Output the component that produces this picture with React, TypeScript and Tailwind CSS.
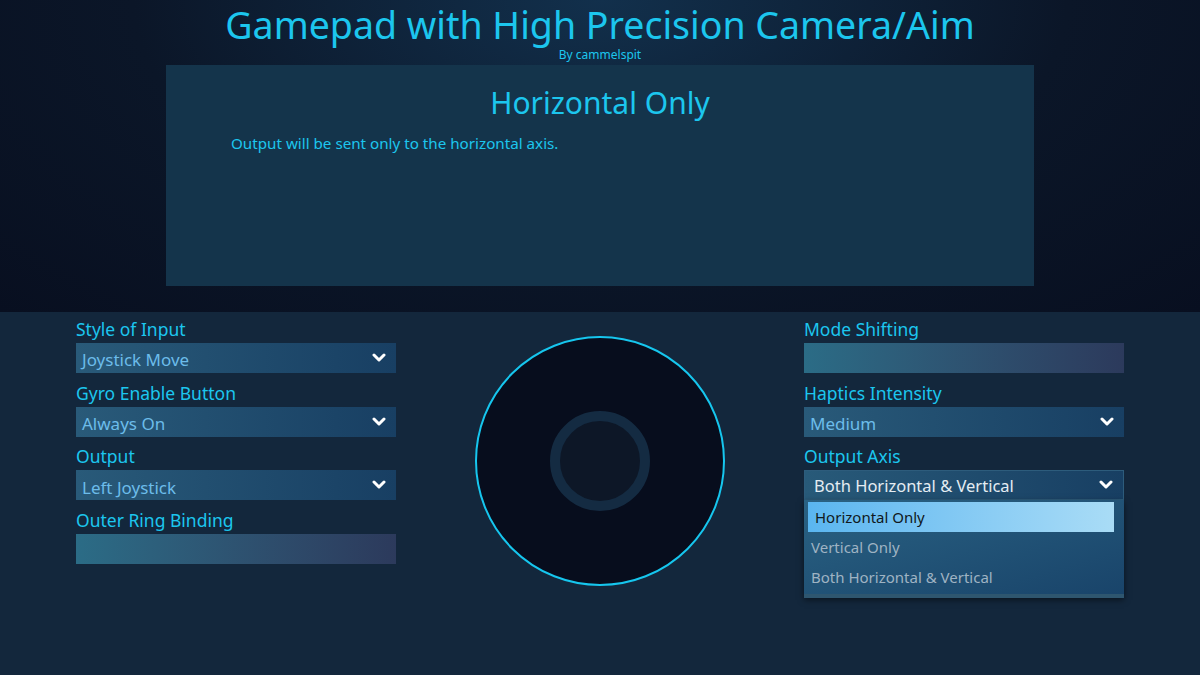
const font = { fontFamily: '"Noto Sans", "Open Sans", sans-serif' };

const Chevron = () => (
  <svg width="14" height="10" viewBox="0 0 14 10" className="shrink-0">
    <polyline points="2,2 7,7 12,2" fill="none" stroke="#ffffff" strokeWidth="3" strokeLinecap="round" strokeLinejoin="round" />
  </svg>
);

type Field = { label: string; value?: string };

const leftFields: Field[] = [
  { label: 'Style of Input', value: 'Joystick Move' },
  { label: 'Gyro Enable Button', value: 'Always On' },
  { label: 'Output', value: 'Left Joystick' },
  { label: 'Outer Ring Binding' },
];

const FieldRow = ({ field }: { field: Field }) => (
  <div className="flex flex-col">
    <div className="h-[22px] text-[17.5px] leading-[21px] text-[#1cc6ee]">{field.label}</div>
    {field.value ? (
      <div className="mt-[2px] flex h-[30px] items-center justify-between bg-gradient-to-r from-[#295a79] to-[#183f63] pl-[6px] pr-[10px]">
        <span className="pt-[4px] text-[17px] text-[#6cbcea]">{field.value}</span>
        <Chevron />
      </div>
    ) : (
      <div className="mt-[2px] h-[30px] bg-gradient-to-r from-[#2b6c86] to-[#2c3a5c]" />
    )}
  </div>
);

const options = ['Horizontal Only', 'Vertical Only', 'Both Horizontal & Vertical'];

export default function App() {
  return (
    <div className="flex h-[675px] w-[1200px] flex-col overflow-hidden bg-[#13273c]" style={font}>
      {/* header + description */}
      <div className="flex h-[312px] flex-col items-center bg-[radial-gradient(ellipse_at_top,#12304c_0%,#0b1628_55%,#080f20_100%)]">
        <h1 className="mt-[6px] h-[38px] text-[37.5px] leading-[38px] text-[#1cc6ee]">Gamepad with High Precision Camera/Aim</h1>
        <div className="mt-[3px] h-[16px] text-[12px] leading-[16px] text-[#1cc6ee]">By cammelspit</div>
        <div className="mt-[2px] h-[221px] w-[868px] bg-[#14344b] px-[65px]">
          <div className="mt-[19px] text-center text-[30px] leading-[38px] text-[#1cc6ee]">Horizontal Only</div>
          <p className="mt-[11px] text-[15.2px] leading-[20px] text-[#1cc6ee]">Output will be sent only to the horizontal axis.</p>
        </div>
      </div>

      {/* controls */}
      <div className="flex flex-1 items-start justify-between px-[76px] pt-[7px]">
        <div className="flex w-[320px] flex-col gap-[9.7px]">
          {leftFields.map((f) => (
            <FieldRow key={f.label} field={f} />
          ))}
        </div>

        <div className="mt-[17px] flex h-[250px] w-[250px] items-center justify-center rounded-full border-2 border-[#16c6ee] bg-[#070d1d]">
          <div className="h-[100px] w-[100px] rounded-full border-[10px] border-[#142b42] bg-[#0d1727]" />
        </div>

        <div className="flex w-[320px] flex-col gap-[9.7px]">
          <FieldRow field={{ label: 'Mode Shifting' }} />
          <FieldRow field={{ label: 'Haptics Intensity', value: 'Medium' }} />
          <div className="relative flex flex-col">
            <div className="h-[22px] text-[17.5px] leading-[21px] text-[#1cc6ee]">Output Axis</div>
            <div className="mt-[2px] flex h-[30px] items-center justify-between border border-[#2d5c7c] bg-gradient-to-r from-[#285a79] to-[#183f63] pl-[9px] pr-[10px]">
              <span className="pt-[2px] text-[16.5px] text-[#e4ecf2]">Both Horizontal &amp; Vertical</span>
              <Chevron />
            </div>
            <div className="absolute left-0 top-[54px] w-[320px] border-b-[4px] border-[#2e566f] bg-gradient-to-br from-[#2a6283] to-[#19446a] pb-[2px] pl-[4px] pr-[10px] pt-[2px] shadow-[0_2px_6px_rgba(0,0,0,0.5)]">
              {options.map((o, i) =>
                i === 0 ? (
                  <div key={o} className="flex h-[30px] items-center bg-gradient-to-r from-[#5ab6f0] to-[#a9dcf6] pl-[7px] text-[15px] text-[#101820]">
                    {o}
                  </div>
                ) : (
                  <div key={o} className="flex h-[30px] items-center pl-[3px] text-[15px] text-[#9fb3c3]">
                    {o}
                  </div>
                )
              )}
            </div>
          </div>
        </div>
      </div>
    </div>
  );
}
